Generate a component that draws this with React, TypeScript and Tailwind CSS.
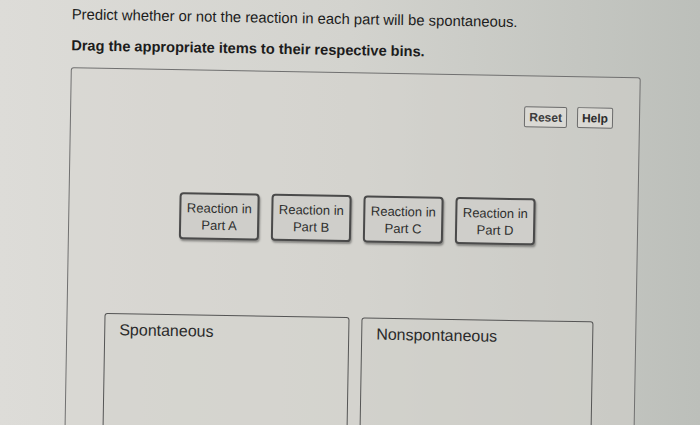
import React from "react";

const tiles = ["A", "B", "C", "D"];

export default function App() {
  return (
    <div className="w-[700px] h-[425px] overflow-hidden bg-gradient-to-r from-[#dddcd8] via-[#d3d3ce] to-[#bcbfba] font-['Liberation_Sans',Arial,sans-serif]">
      <div className="origin-top-left rotate-[1deg] pl-[72px] pt-[4px]">
        <p className="text-[14.8px] leading-[18px] text-[#1c1c1c]">
          Predict whether or not the reaction in each part will be spontaneous.
        </p>
        <p className="mt-[13px] text-[14.6px] leading-[18px] font-bold text-[#1c1c1c]">
          Drag the appropriate items to their respective bins.
        </p>
        <div className="mt-[13px] w-[570px] h-[420px] border border-[#707070] rounded-[3px] bg-[#d6d5d0]/40">
          <div className="flex justify-end gap-[10px] pt-[30px] pr-[26px]">
            <div className="h-[21px] flex items-center px-[4px] border border-[#6b6b6b] rounded-[2px] text-[12px] font-bold text-[#3c3c3c] bg-[#dad9d4]">
              Reset
            </div>
            <div className="h-[21px] flex items-center px-[4px] border border-[#6b6b6b] rounded-[2px] text-[12px] font-bold text-[#2c2c2c] bg-[#dad9d4]">
              Help
            </div>
          </div>
          <div className="flex gap-[12px] pl-[110px] mt-[71px]">
            {tiles.map((t) => (
              <div
                key={t}
                className="w-[80px] h-[47px] flex flex-col items-center justify-center border-2 border-[#4a4a4a] rounded-[4px] bg-[#cfceca] shadow-[1px_2px_2px_rgba(0,0,0,0.35)] text-[13px] leading-[17px] text-[#2e2e2e]"
              >
                <span>Reaction in</span>
                <span>Part {t}</span>
              </div>
            ))}
          </div>
          <div className="flex gap-[12px] pl-[37px] mt-[75px]">
            <div className="w-[245px] h-[200px] border-[1.5px] border-[#555] rounded-[3px] bg-[#d4d3ce]/50 pl-[14px] pt-[4px]">
              <span className="text-[16px] leading-[20px] text-[#2a2a2a]">Spontaneous</span>
            </div>
            <div className="w-[232px] h-[200px] border-[1.5px] border-[#555] rounded-[3px] bg-[#cfcfca]/50 pl-[14px] pt-[4px]">
              <span className="text-[16px] leading-[20px] text-[#2a2a2a]">Nonspontaneous</span>
            </div>
          </div>
        </div>
      </div>
    </div>
  );
}
